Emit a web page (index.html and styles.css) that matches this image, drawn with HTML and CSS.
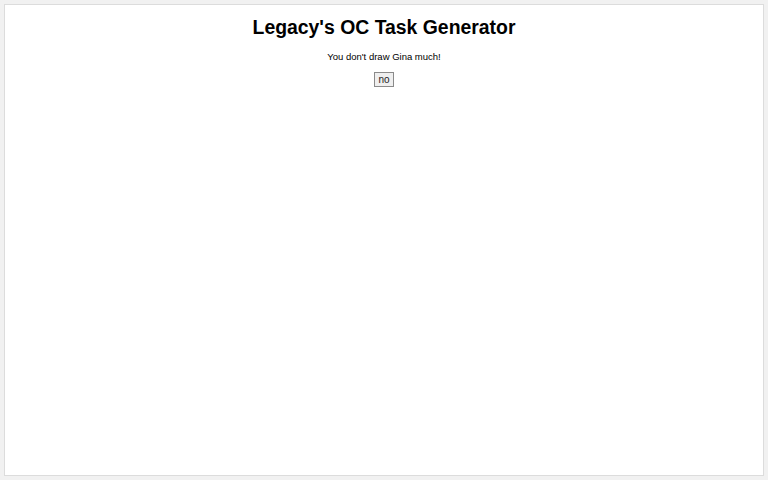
FILE: index.html
```html
<html>
  <head>
    <title>Legacy's OC Task Generator</title>
    <link rel="stylesheet" href="styles.css">
  </head>
  <body>
    <main class="panel">
      <h1 class="title">Legacy's OC Task Generator</h1>
      <p class="task">You don't draw Gina much!</p>
      <button class="reroll">no</button>
    </main>
  </body>
</html>
```

FILE: styles.css
```css
html { background:#f1f1f1; }

body
{
  margin:4px;
  font-family:"Liberation Sans", Arial, sans-serif;
}

.panel
{
  background:white;
  border:1px solid #dcdcdc;
  height:472px;
  box-sizing:border-box;
  text-align:center;
  padding-top:11px;
}

.title
{
  font-size:19.4px;
  font-weight:bold;
  margin:0 0 12px;
}

.task
{
  font-size:9.5px;
  margin:0 0 10px;
}

.reroll
{
  font-family:"Liberation Sans", Arial, sans-serif;
  font-size:10px;
  padding:1px 3px;
  background:#efefef;
  border:1px solid #8a8a8a;
  border-radius:0;
  color:#222;
}
```
